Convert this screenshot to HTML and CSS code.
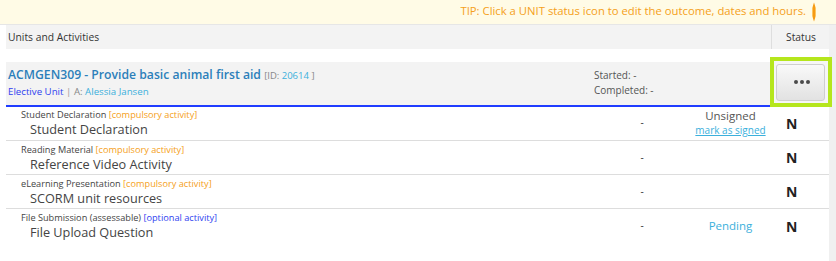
FILE: index.html
```html
<!DOCTYPE html>
<html>
<head>
<meta charset="utf-8">
<link rel="stylesheet" href="styles.css">
</head>
<body>
<div class="tip">
  <span class="tip-text">TIP: Click a UNIT status icon to edit the outcome, dates and hours.</span>
  <svg class="tip-arrow" width="6" height="20" viewBox="0 0 6 20">
    <defs>
      <linearGradient id="ag" x1="0" y1="0" x2="1" y2="0">
        <stop offset="0" stop-color="#ffc04a"/>
        <stop offset="0.5" stop-color="#f28c00"/>
        <stop offset="1" stop-color="#ffc04a"/>
      </linearGradient>
    </defs>
    <path d="M3 0.5 L4.8 6 L4.8 14 L3 19.5 L1.2 14 L1.2 6 Z" fill="url(#ag)"/>
  </svg>
</div>
<div class="page">
  <div class="content">
    <div class="grid head">
      <div class="head-title">Units and Activities</div>
      <div></div>
      <div></div>
      <div class="head-status">Status</div>
    </div>

    <div class="grid unit">
      <div class="unit-main">
        <div class="unit-title">ACMGEN309 - Provide basic animal first aid <span class="unit-id">[ID: <span class="id-num">20614</span> ]</span></div>
        <div class="unit-sub"><span class="elective">Elective Unit</span> <span class="sep">|</span> A: <span class="assessor">Alessia Jansen</span></div>
      </div>
      <div class="unit-dates">
        <div>Started: -</div>
        <div>Completed: -</div>
      </div>
      <div class="unit-blank"></div>
      <div class="unit-status">
        <div class="hl">
          <div class="btn"><span class="dot"></span><span class="dot"></span><span class="dot"></span></div>
        </div>
      </div>
    </div>

    <div class="grid act first">
      <div class="act-main">
        <div class="act-type">Student Declaration <span class="compulsory">[compulsory activity]</span></div>
        <div class="act-name">Student Declaration</div>
      </div>
      <div class="act-dash">-</div>
      <div class="act-state">
        <div class="unsigned">Unsigned</div>
        <a class="mark">mark as signed</a>
      </div>
      <div class="act-n">N</div>
    </div>

    <div class="grid act">
      <div class="act-main">
        <div class="act-type">Reading Material <span class="compulsory">[compulsory activity]</span></div>
        <div class="act-name">Reference Video Activity</div>
      </div>
      <div class="act-dash">-</div>
      <div class="act-state"></div>
      <div class="act-n">N</div>
    </div>

    <div class="grid act">
      <div class="act-main">
        <div class="act-type">eLearning Presentation <span class="compulsory">[compulsory activity]</span></div>
        <div class="act-name">SCORM unit resources</div>
      </div>
      <div class="act-dash">-</div>
      <div class="act-state"></div>
      <div class="act-n">N</div>
    </div>

    <div class="grid act last">
      <div class="act-main">
        <div class="act-type">File Submission (assessable) <span class="optional">[optional activity]</span></div>
        <div class="act-name">File Upload Question</div>
      </div>
      <div class="act-dash">-</div>
      <div class="act-state"><span class="pending">Pending</span></div>
      <div class="act-n">N</div>
    </div>
  </div>
  <div class="scroll"></div>
</div>
</body>
</html>
```

FILE: styles.css
```css
* { box-sizing: border-box; }
html, body { margin: 0; padding: 0; background: #fff; }
body {
  font-family: "Open Sans", "Noto Sans", sans-serif;
  color: #333;
  width: 836px;
  height: 261px;
  overflow: hidden;
}

.tip {
  height: 25px;
  background: #fffbe6;
  border-bottom: 1px solid #e6e6e6;
  display: flex;
  justify-content: flex-end;
  align-items: center;
  padding: 0 19px 3px 0;
}
.tip-text {
  color: #f5a020;
  font-size: 11.3px;
  line-height: 14px;
}
.tip-arrow { margin-left: 5px; margin-top: 3px; }

.page {
  display: flex;
  height: 236px;
}
.content {
  margin-left: 6px;
  width: 823px;
}
.scroll {
  width: 7px;
  background: #f0f0f0;
}

.grid {
  display: grid;
  grid-template-columns: 584px 100px 81px 58px;
}

.head {
  height: 24px;
  background: #f3f3f3;
  margin-bottom: 13px;
  font-size: 10.3px;
  color: #333;
}
.head-title {
  display: flex;
  align-items: center;
  padding-left: 2px;
}
.head-status {
  border-left: 1px solid #dedede;
  display: flex;
  align-items: center;
  justify-content: center;
  padding-left: 1px;
}

.unit {
  height: 44px;
  background: #f3f3f3;
}
.unit-main, .unit-dates, .unit-blank {
  border-bottom: 2px solid #1f3cff;
}
.unit-main { padding: 4px 0 0 2px; }
.unit-title {
  font-size: 12.2px;
  font-weight: 600;
  color: #2c7fba;
  line-height: 18px;
}
.unit-id {
  font-size: 9.5px;
  font-weight: 400;
  color: #888;
}
.id-num { color: #3bb0dc; }
.unit-sub {
  font-size: 9.7px;
  line-height: 14px;
  color: #888;
}
.elective { color: #2f3ff0; }
.sep { color: #999; }
.assessor { color: #3bb0dc; }

.unit-dates {
  padding: 6px 0 0 4px;
  font-size: 10px;
  line-height: 15px;
  color: #555;
}

.unit-status { position: relative; z-index: 1; }
.hl {
  margin: -5px -3px 0 -1px;
  height: 50px;
  border: 4px solid #b5e61d;
  background: #f6f6f6;
  display: flex;
  align-items: center;
  padding-left: 2px;
}
.btn {
  width: 49px;
  height: 37px;
  border: 1px solid #cfcfcf;
  border-radius: 3px;
  background: linear-gradient(#f9f9f9, #e2e2e2);
  display: flex;
  align-items: center;
  justify-content: center;
  gap: 2px;
  padding-left: 2px;
}
.dot {
  width: 4px;
  height: 4px;
  border-radius: 50%;
  background: #4a4a4a;
}

.act {
  height: 34px;
  border-bottom: 1px solid #dddddd;
}
.act.first { height: 35px; }
.act.last { border-bottom: none; }
.act-main { padding: 2px 0 0 15px; }
.act-type {
  font-size: 9.2px;
  line-height: 13px;
  color: #444;
}
.compulsory { color: #f5a020; }
.optional { color: #2f3ff0; }
.act-name {
  font-size: 12.7px;
  line-height: 16px;
  color: #444;
  padding-left: 9px;
}
.act-dash {
  display: flex;
  align-items: center;
  justify-content: center;
  font-size: 10px;
  color: #333;
  padding-left: 4px;
  padding-bottom: 2px;
}
.act-state {
  display: flex;
  flex-direction: column;
  align-items: center;
  justify-content: center;
  text-align: center;
  padding-bottom: 1px;
}
.unsigned {
  font-size: 11.5px;
  line-height: 14px;
  color: #555;
}
.mark {
  font-size: 10px;
  line-height: 14px;
  color: #3bb0dc;
  text-decoration: underline;
}
.pending {
  font-size: 11.5px;
  color: #3bb0dc;
}
.act-n {
  display: flex;
  align-items: center;
  padding-left: 15px;
  font-size: 14px;
  font-weight: 700;
  color: #222;
}
```
